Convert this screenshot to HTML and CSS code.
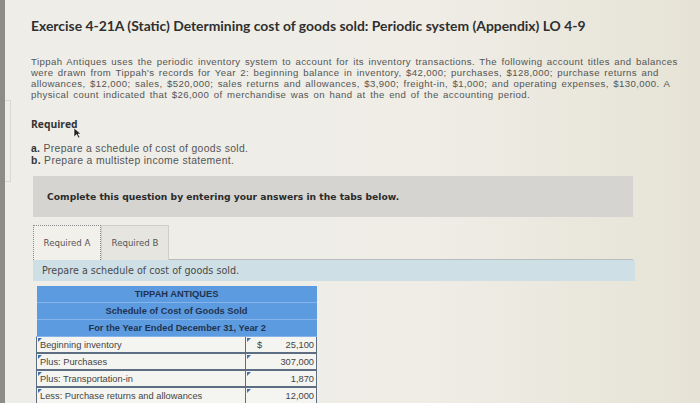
FILE: index.html
```html
<!DOCTYPE html>
<html>
<head>
<meta charset="utf-8">
<link rel="stylesheet" href="styles.css">
</head>
<body>
<div class="frame">
  <div class="edge"><div class="edge-box"></div></div>
  <main class="page">
    <h1 class="title">Exercise 4-21A (Static) Determining cost of goods sold: Periodic system (Appendix) LO 4-9</h1>
    <p class="intro">Tippah Antiques uses the periodic inventory system to account for its inventory transactions. The following account titles and balances<br>were drawn from Tippah's records for Year 2: beginning balance in inventory, $42,000; purchases, $128,000; purchase returns and<br>allowances, $12,000; sales, $520,000; sales returns and allowances, $3,900; freight-in, $1,000; and operating expenses, $130,000. A<br>physical count indicated that $26,000 of merchandise was on hand at the end of the accounting period.</p>
    <div class="required">
      <h2 class="req-title">Required</h2>
      <svg class="cursor" width="9" height="12" viewBox="0 0 9 12"><path d="M1 1 L1 10 L3.5 7.5 L5.5 11 L7 10.3 L5 7 L8 7 Z" fill="#222" stroke="#fff" stroke-width="0.6"/></svg>
      <ul class="tasks">
        <li><b>a.</b> Prepare a schedule of cost of goods sold.</li>
        <li><b>b.</b> Prepare a multistep income statement.</li>
      </ul>
    </div>
    <div class="notice">Complete this question by entering your answers in the tabs below.</div>
    <div class="tabs">
      <div class="tab active">Required A</div>
      <div class="tab">Required B</div>
      <div class="tab-fill"></div>
    </div>
    <div class="prompt">Prepare a schedule of cost of goods sold.</div>
    <table class="sched">
      <tr class="hd"><th colspan="2">TIPPAH ANTIQUES</th></tr>
      <tr class="hd"><th colspan="2">Schedule of Cost of Goods Sold</th></tr>
      <tr class="hd"><th colspan="2">For the Year Ended December 31, Year 2</th></tr>
      <tr><td class="lbl"><span class="flag"></span>Beginning inventory</td><td class="amt"><span class="flag"></span><span class="cur">$</span>25,100</td></tr>
      <tr><td class="lbl"><span class="flag"></span>Plus: Purchases</td><td class="amt"><span class="flag"></span>307,000</td></tr>
      <tr><td class="lbl"><span class="flag"></span>Plus: Transportation-in</td><td class="amt"><span class="flag"></span>1,870</td></tr>
      <tr><td class="lbl"><span class="flag"></span>Less: Purchase returns and allowances</td><td class="amt"><span class="flag"></span>12,000</td></tr>
    </table>
  </main>
</div>
</body>
</html>
```
FILE: styles.css
```css
html, body {
  margin: 0;
  padding: 0;
  height: 100%;
  overflow: hidden;
}
body {
  background: linear-gradient(90deg, #eeede8 0%, #efede6 60%, #e6e3d6 100%);
  font-family: "Open Sans", "Liberation Sans", sans-serif;
  color: #3a3a3a;
}
.frame {
  display: flex;
  height: 403px;
}
.edge {
  width: 5px;
  background: #8d8c88;
  position: relative;
  flex: none;
}
.edge-box {
  position: absolute;
  left: 5px;
  top: 100px;
  width: 5px;
  height: 80px;
  border: 1px solid #d8d7d2;
  border-left: none;
}
.page {
  flex: 1;
  padding: 18px 0 0 26px;
}
.title {
  margin: 0;
  font-family: Lato, "Open Sans", sans-serif;
  font-size: 13.9px;
  line-height: 16px;
  font-weight: 700;
  color: #2f2f2f;
  white-space: nowrap;
}
.intro {
  margin: 22px 0 0;
  font-family: "Liberation Sans", Arial, sans-serif;
  font-size: 9.6px;
  line-height: 11px;
  letter-spacing: 0.4px;
  word-spacing: 1.4px;
  color: #555;
  white-space: nowrap;
}
.required {
  position: relative;
  margin-top: 18px;
}
.req-title {
  margin: 0;
  font-size: 10.3px;
  line-height: 12px;
  font-weight: 700;
  color: #333;
}
.cursor {
  position: absolute;
  left: 42px;
  top: 9px;
}
.tasks {
  list-style: none;
  margin: 13px 0 0;
  padding: 0;
  font-family: "Liberation Sans", Arial, sans-serif;
  font-size: 10.4px;
  line-height: 12px;
  letter-spacing: 0.33px;
  color: #555;
}
.tasks b {
  color: #333;
}
.notice {
  margin: 9px 0 0 2px;
  width: 586px;
  height: 41px;
  padding-left: 14px;
  display: flex;
  align-items: center;
  background: #d5d4d0;
  font-family: "DejaVu Sans", Verdana, sans-serif;
  font-weight: 700;
  font-size: 9.2px;
  color: #2b2b2b;
}
.tabs {
  display: flex;
  margin: 8px 0 0 2px;
  width: 600px;
  height: 35px;
}
.tab {
  width: 68px;
  display: flex;
  align-items: center;
  justify-content: center;
  font-family: "DejaVu Sans", Verdana, sans-serif;
  font-size: 8.6px;
  color: #555;
  background: #e6e5e0;
  border: 1px solid #cfceca;
  border-bottom: none;
  box-sizing: border-box;
}
.tab.active {
  background: #f1f0eb;
  border: 1px dotted #8a8a8a;
  border-bottom: none;
}
.tab-fill {
  flex: 1;
  border-bottom: 1px solid #b9bcbd;
}
.prompt {
  margin-left: 2px;
  width: 593px;
  height: 21px;
  padding-left: 9px;
  display: flex;
  align-items: center;
  background: #cfdfe6;
  font-family: "DejaVu Sans", Verdana, sans-serif;
  font-size: 9.6px;
  color: #4a4a4a;
}
.sched {
  margin: 5px 0 0 5px;
  width: 281px;
  border-collapse: collapse;
  font-family: "Liberation Sans", Arial, sans-serif;
  font-size: 9.3px;
}
.sched th {
  height: 16px;
  padding: 0;
  background: #5d9be0;
  border-bottom: 1px solid #86b4ea;
  color: #1f3350;
  font-weight: 700;
  text-align: center;
}
.sched tr.hd:nth-child(3) th {
  text-align: left;
  padding-left: 52px;
}
.sched td {
  height: 15px;
  padding: 0;
  background: #f4f4f1;
  border: 1px solid #5e6e82;
  border-width: 1px 1px 2px 1px;
  color: #444;
  position: relative;
}
.sched td.lbl {
  padding-left: 3px;
}
.sched td.amt {
  width: 68px;
  text-align: right;
  padding-right: 2px;
}
.cur {
  position: absolute;
  left: 11px;
  top: 3px;
}
.flag {
  position: absolute;
  left: 1px;
  top: 1px;
  width: 0;
  height: 0;
  border-top: 4px solid #3d6fb0;
  border-right: 4px solid transparent;
}
```
